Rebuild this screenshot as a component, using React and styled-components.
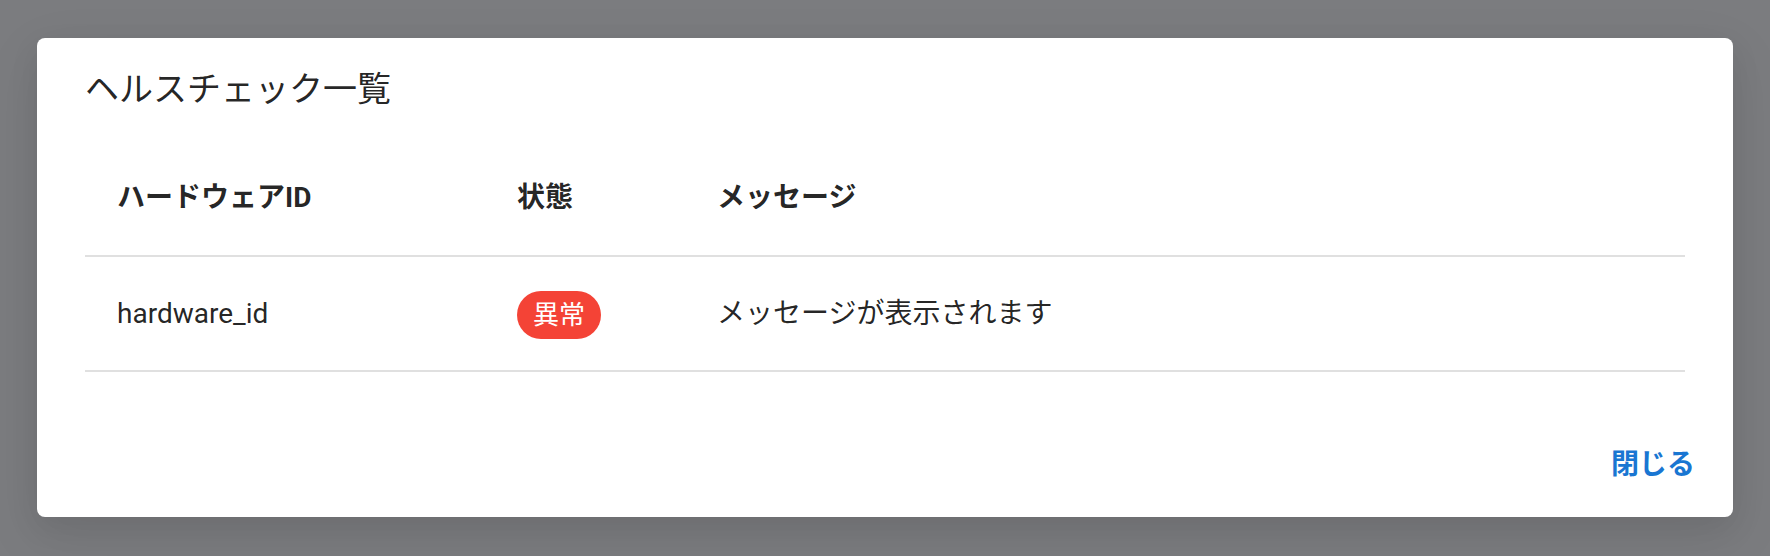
import React from "react";
import styled, { createGlobalStyle } from "styled-components";

const GlobalStyle = createGlobalStyle`
  html, body {
    margin: 0;
    padding: 0;
    height: 100%;
    background: #7b7c7f;
  }
  body {
    font-family: Roboto, "Noto Sans CJK JP", sans-serif;
    color: rgba(0, 0, 0, 0.87);
  }
`;

const Backdrop = styled.div`
  box-sizing: border-box;
  width: 100%;
  height: 556px;
  padding: 38px 37px 0;
  display: flex;
  justify-content: center;
  align-items: flex-start;
`;

const Dialog = styled.section`
  box-sizing: border-box;
  width: 100%;
  background: #ffffff;
  border-radius: 8px;
  box-shadow: 0 18px 56px 4px rgba(0, 0, 0, 0.07),
    0 10px 30px 2px rgba(0, 0, 0, 0.06);
  display: flex;
  flex-direction: column;
`;

const Title = styled.h2`
  margin: 0;
  padding: 30px 48px 34px;
  font-size: 34px;
  line-height: 42px;
  font-weight: 400;
  color: rgba(0, 0, 0, 0.87);
`;

const Content = styled.div`
  padding: 0 48px 40px;
`;

const Table = styled.table`
  width: 100%;
  border-collapse: separate;
  border-spacing: 0;
  table-layout: fixed;
`;

const HeadCell = styled.th`
  box-sizing: border-box;
  width: ${(p) => p.$width || "auto"};
  padding: 30px 32px 33px;
  text-align: left;
  font-size: 28px;
  line-height: 48px;
  font-weight: 700;
  color: rgba(0, 0, 0, 0.87);
  border-bottom: 2px solid #e0e0e0;
  vertical-align: middle;
`;

const Cell = styled.td`
  box-sizing: border-box;
  padding: 32px 32px 31px;
  font-size: 28px;
  line-height: 48px;
  font-weight: 400;
  color: rgba(0, 0, 0, 0.87);
  border-bottom: 2px solid #e0e0e0;
  vertical-align: middle;
`;

const StatusChip = styled.span`
  display: inline-flex;
  align-items: center;
  justify-content: center;
  height: 48px;
  padding: 0 16px;
  border-radius: 24px;
  background: ${(p) => (p.$tone === "error" ? "#f44336" : "#4caf50")};
  color: #ffffff;
  font-size: 26px;
  line-height: 1;
  vertical-align: middle;
`;

const Actions = styled.div`
  display: flex;
  justify-content: flex-end;
  align-items: center;
  padding: 16px;
`;

const TextButton = styled.button`
  min-width: 128px;
  padding: 12px 16px;
  border: none;
  border-radius: 8px;
  background: transparent;
  color: #1976d2;
  font-family: Roboto, "Noto Sans CJK JP", sans-serif;
  font-size: 28px;
  line-height: 49px;
  font-weight: 700;
  cursor: pointer;
  &:hover {
    background: rgba(25, 118, 210, 0.04);
  }
`;

const rows = [
  { id: "hardware_id", status: "異常", tone: "error", message: "メッセージが表示されます" },
];

export default function App() {
  return (
    <>
      <GlobalStyle />
      <Backdrop>
        <Dialog role="dialog" aria-labelledby="health-title">
          <Title id="health-title">ヘルスチェック一覧</Title>
          <Content>
            <Table>
              <thead>
                <tr>
                  <HeadCell $width="400px">ハードウェアID</HeadCell>
                  <HeadCell $width="200px">状態</HeadCell>
                  <HeadCell>メッセージ</HeadCell>
                </tr>
              </thead>
              <tbody>
                {rows.map((r) => (
                  <tr key={r.id}>
                    <Cell>{r.id}</Cell>
                    <Cell>
                      <StatusChip $tone={r.tone}>{r.status}</StatusChip>
                    </Cell>
                    <Cell>{r.message}</Cell>
                  </tr>
                ))}
              </tbody>
            </Table>
          </Content>
          <Actions>
            <TextButton type="button">閉じる</TextButton>
          </Actions>
        </Dialog>
      </Backdrop>
    </>
  );
}
